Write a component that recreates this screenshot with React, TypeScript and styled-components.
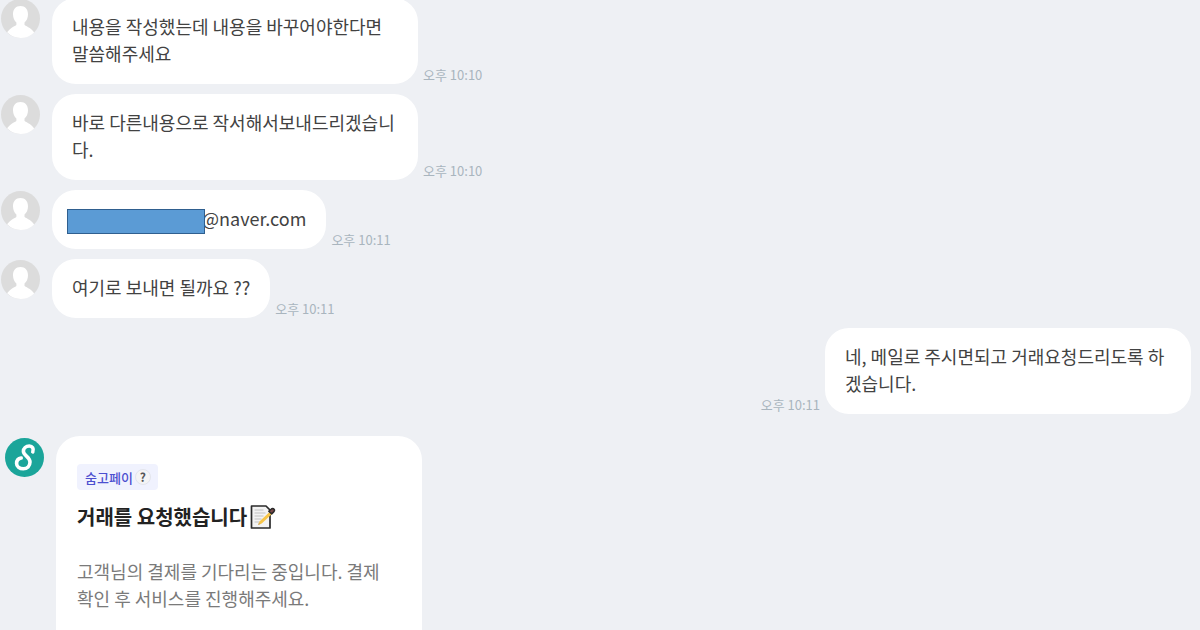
import React from "react";
import styled, { createGlobalStyle } from "styled-components";

const GlobalStyle = createGlobalStyle`
  *, *::before, *::after { box-sizing: border-box; }
  html, body { margin: 0; }
  html { overflow: hidden; }
  body {
    background: #eef0f4;
    color: #424242;
    font-family: "Noto Sans CJK KR", "Noto Sans KR", sans-serif;
    font-size: 18px;
    line-height: 27px;
    word-break: break-all;
  }
`;

const Chat = styled.main`
  height: 100vh;
  overflow: hidden;
`;

const Messages = styled.ol`
  display: flex;
  flex-direction: column;
  gap: 10px;
  margin: -2px 0 0;
  padding: 0 9px 0 1px;
  list-style: none;
`;

const Row = styled.li<{ $mine?: boolean }>`
  display: flex;
  flex-direction: ${(p) => (p.$mine ? "row-reverse" : "row")};
  align-items: flex-start;
`;

const CardRow = styled(Row)`
  gap: 12px;
  padding: 12px 0 0 4px;
`;

const AvatarIcon = styled.svg`
  flex: none;
  width: 39px;
  height: 39px;
  margin: 1px 12px 0 0;
`;

const LogoIcon = styled(AvatarIcon)`
  margin: 2px 0 0;
`;

const Bubble = styled.p<{ $single?: boolean }>`
  max-width: 366px;
  margin: 0;
  padding: 15px 20px 17px;
  border-radius: 24px;
  background: #fff;
  white-space: ${(p) => (p.$single ? "nowrap" : "normal")};
`;

const Time = styled.time`
  flex: none;
  align-self: flex-end;
  margin: 0 5px;
  color: #a9b5be;
  font-size: 13px;
  line-height: 18px;
`;

const Redacted = styled.span`
  display: inline-block;
  position: relative;
  width: 138px;
  height: 25px;
  margin: 0 -3px 0 -5px;
  border: 1px solid #2f5f8f;
  background: #5b9bd5;
  vertical-align: top;
  top: 4px;
`;

const Card = styled.article`
  width: 366px;
  min-height: 240px;
  padding: 28px 21px;
  border-radius: 24px;
  background: #fff;
`;

const Badge = styled.div`
  display: flex;
  align-items: center;
  gap: 3px;
  width: fit-content;
  height: 26px;
  padding: 0 8px;
  border-radius: 4px;
  background: #f0f2fe;
  color: #4c4fd0;
  font-size: 13px;
  font-weight: 500;
`;

const Help = styled.button`
  width: 14px;
  height: 14px;
  padding: 0;
  border: 0;
  border-radius: 50%;
  outline: 1px solid #e3e5ec;
  background: #f4f4f5;
  color: #555;
  font: 700 12px/14px "Noto Sans CJK KR", sans-serif;
`;

const Title = styled.h2`
  display: flex;
  align-items: center;
  gap: 3px;
  margin: 13px 0 27px;
  color: #222;
  font-size: 20px;
  font-weight: 700;
  line-height: 28px;
`;

const MemoIcon = styled.svg`
  flex: none;
  width: 26px;
  height: 26px;
`;

const Body = styled.p`
  margin: 0;
  color: #7a7a7a;
  word-break: keep-all;
`;

const Avatar = () => (
  <AvatarIcon viewBox="0 0 39 39" role="img" aria-label="프로필">
    <circle cx="19.5" cy="19.5" r="19.5" fill="#dcdcdc" />
    <path
      d="M19.5 7c-4.800 0-7.500 3.300-7.500 8.200 0 3.600 1.300 6.500 3.400 8.300v2.200c-.3 1.200-6 2.600-9.300 7.600A19.500 19.500 0 0 0 19.500 39a19.500 19.500 0 0 0 13.700-5.600c-3.300-5-9.300-6.400-9.700-7.600v-2.200c2.100-1.800 3.500-4.700 3.500-8.400 0-4.900-2.800-8.200-7.500-8.200z"
      fill="#fff"
    />
  </AvatarIcon>
);

const Logo = () => (
  <LogoIcon viewBox="0 0 39 39" role="img" aria-label="숨고">
    <circle cx="19.5" cy="19.5" r="19.5" fill="#1ba59a" />
    <path
      d="M27.800 13.800C29 10.600 27.400 8 24.300 8c-3.300 0-5.900 2.300-5.900 5.300 0 4.300 6.600 5.600 6.600 10.700 0 3.900-2.900 6.800-6.700 6.800-3.700 0-6.700-2.100-6.700-5.400 0-2.800 1.900-4.800 4.600-5.300"
      fill="none"
      stroke="#fff"
      strokeWidth="3.600"
      strokeLinecap="round"
      strokeLinejoin="round"
    />
  </LogoIcon>
);

const Memo = () => (
  <MemoIcon viewBox="0 0 26 26" aria-hidden="true">
    <path d="M1.500 2h14.500l4 4v18H1.500z" fill="#f3f3f3" stroke="#2b2b2b" strokeWidth="1.700" strokeLinejoin="round" />
    <path d="M4.500 6h9M4.500 9h11M4.500 12h9M4.500 15h7M4.500 18h5" stroke="#c2c2c2" strokeWidth="1.100" />
    <path d="M8 21l1.500-3.400L20.300 7.300l2.200 2.200-10.800 10z" fill="#f7c548" />
    <path d="M8 21l1-2.300 1.500 1.400z" fill="#c9a46a" />
    <path d="M18.800 7.300l2.200-2c1-1 2.500-.9 3.100 0 .6.800.4 1.800-.4 2.600l-2 2z" fill="#7d4a4a" stroke="#2b2b2b" strokeWidth="1.500" strokeLinejoin="round" />
  </MemoIcon>
);

interface Message {
  text: React.ReactNode;
  time: string;
  mine?: boolean;
  single?: boolean;
}

const messages: Message[] = [
  { text: "내용을 작성했는데 내용을 바꾸어야한다면 말씀해주세요", time: "10:10" },
  { text: "바로 다른내용으로 작서해서보내드리겠습니다.", time: "10:10" },
  { text: <><Redacted />@naver.com</>, time: "10:11", single: true },
  { text: "여기로 보내면 될까요 ??", time: "10:11", single: true },
  { text: "네, 메일로 주시면되고 거래요청드리도록 하겠습니다.", time: "10:11", mine: true },
];

export default function App() {
  return (
    <>
      <GlobalStyle />
      <Chat>
        <Messages>
          {messages.map((m, i) => (
            <Row key={i} $mine={m.mine}>
              {!m.mine && <Avatar />}
              <Bubble $single={m.single}>{m.text}</Bubble>
              <Time>오후 {m.time}</Time>
            </Row>
          ))}
          <CardRow>
            <Logo />
            <Card>
              <Badge>
                숨고페이
                <Help type="button" aria-label="숨고페이 도움말">?</Help>
              </Badge>
              <Title>
                거래를 요청했습니다
                <Memo />
              </Title>
              <Body>고객님의 결제를 기다리는 중입니다. 결제 확인 후 서비스를 진행해주세요.</Body>
            </Card>
          </CardRow>
        </Messages>
      </Chat>
    </>
  );
}
